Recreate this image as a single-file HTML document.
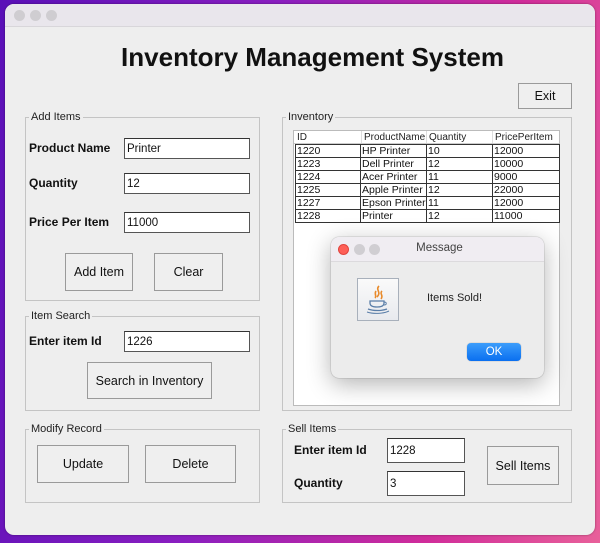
<!DOCTYPE html>
<html><head><style>
*{margin:0;padding:0;box-sizing:border-box}
body{width:600px;height:543px;overflow:hidden;position:relative;font-family:"Liberation Sans","DejaVu Sans",sans-serif;background:linear-gradient(100deg,#5a10b8 0%,#8a1ec0 40%,#d02c9a 75%,#e8609a 100%)}
.a{position:absolute}
.win{left:5px;top:4px;width:590px;height:531px;background:#eeeeee;border-radius:9px;overflow:hidden;box-shadow:0 0 2px rgba(0,0,0,.4)}
.tb{left:0;top:0;width:590px;height:23px;background:#e9e6ec;border-bottom:1px solid #d8d6da}
.dot{width:11px;height:11px;border-radius:50%;background:#cfcdd1;top:6px}
.g{border:1px solid #c4c4c4}
.gl{font-size:11px;color:#222;background:#eeeeee;padding:0 2px;line-height:12px}
.lb{font-size:12px;font-weight:bold;color:#111}
.f{background:#fff;border:1px solid #555;border-top-color:#333;font-size:11.5px;padding-left:2px;color:#111;display:flex;align-items:center}
.b{border:1px solid #9a9a9a;background:#efefef;font-size:12.5px;display:flex;align-items:center;justify-content:center;color:#111}
table{border-collapse:collapse;font-size:10.5px;table-layout:fixed}
td{border:1px solid #333;height:13px;padding:0 1px;line-height:11px;color:#111;white-space:nowrap;overflow:hidden}
</style></head><body>
<div class="a win">
<div class="a tb"></div>
<div class="a dot" style="left:9px"></div><div class="a dot" style="left:25px"></div><div class="a dot" style="left:41px"></div>
</div>
<div class="a" style="left:0;top:42px;width:625px;text-align:center;font-size:26px;font-weight:bold;color:#111">Inventory Management System</div>
<div class="a b" style="left:518px;top:83px;width:54px;height:26px">Exit</div>

<div class="a g" style="left:25px;top:117px;width:235px;height:184px"></div>
<div class="a gl" style="left:29px;top:111px">Add Items</div>
<div class="a lb" style="left:29px;top:141px">Product Name</div>
<div class="a f" style="left:124px;top:138px;width:126px;height:21px">Printer</div>
<div class="a lb" style="left:29px;top:176px">Quantity</div>
<div class="a f" style="left:124px;top:173px;width:126px;height:21px">12</div>
<div class="a lb" style="left:29px;top:215px">Price Per Item</div>
<div class="a f" style="left:124px;top:212px;width:126px;height:21px">11000</div>
<div class="a b" style="left:65px;top:253px;width:68px;height:38px">Add Item</div>
<div class="a b" style="left:154px;top:253px;width:69px;height:38px">Clear</div>

<div class="a g" style="left:25px;top:316px;width:235px;height:95px"></div>
<div class="a gl" style="left:29px;top:310px">Item Search</div>
<div class="a lb" style="left:29px;top:334px">Enter item Id</div>
<div class="a f" style="left:124px;top:331px;width:126px;height:21px">1226</div>
<div class="a b" style="left:87px;top:362px;width:125px;height:37px">Search in Inventory</div>

<div class="a g" style="left:25px;top:429px;width:235px;height:74px"></div>
<div class="a gl" style="left:29px;top:423px">Modify Record</div>
<div class="a b" style="left:37px;top:445px;width:92px;height:38px">Update</div>
<div class="a b" style="left:145px;top:445px;width:91px;height:38px">Delete</div>

<div class="a g" style="left:282px;top:117px;width:290px;height:294px"></div>
<div class="a gl" style="left:286px;top:111px">Inventory</div>
<div class="a" style="left:293px;top:130px;width:267px;height:276px;background:#fff;border:1px solid #bbb"></div>
<div class="a" style="left:294px;top:131px;font-size:10px;color:#222">
<div style="display:flex;height:13px;line-height:13px;border-bottom:1px solid #ccc;width:265px;white-space:nowrap"><span style="width:67px;padding-left:3px">ID</span><span style="width:65px;padding-left:2px;border-left:1px solid #ddd">ProductName</span><span style="width:66px;padding-left:2px;border-left:1px solid #ddd">Quantity</span><span style="width:67px;padding-left:2px;border-left:1px solid #ddd">PricePerItem</span></div>
</div>
<table class="a" style="left:295px;top:144px;width:264px">
<colgroup><col style="width:65px"><col style="width:66px"><col style="width:66px"><col style="width:67px"></colgroup>
<tr><td>1220</td><td>HP Printer</td><td>10</td><td>12000</td></tr>
<tr><td>1223</td><td>Dell Printer</td><td>12</td><td>10000</td></tr>
<tr><td>1224</td><td>Acer Printer</td><td>11</td><td>9000</td></tr>
<tr><td>1225</td><td>Apple Printer</td><td>12</td><td>22000</td></tr>
<tr><td>1227</td><td>Epson Printer</td><td>11</td><td>12000</td></tr>
<tr><td>1228</td><td>Printer</td><td>12</td><td>11000</td></tr>
</table>

<div class="a g" style="left:282px;top:429px;width:290px;height:74px"></div>
<div class="a gl" style="left:286px;top:423px">Sell Items</div>
<div class="a lb" style="left:294px;top:443px">Enter item Id</div>
<div class="a f" style="left:387px;top:438px;width:78px;height:25px">1228</div>
<div class="a lb" style="left:294px;top:476px">Quantity</div>
<div class="a f" style="left:387px;top:471px;width:78px;height:25px">3</div>
<div class="a b" style="left:487px;top:446px;width:72px;height:39px">Sell Items</div>

<div class="a" style="left:331px;top:237px;width:213px;height:141px;background:#ececec;border-radius:8px;box-shadow:0 6px 24px rgba(0,0,0,.3),0 0 1px rgba(0,0,0,.5);overflow:hidden">
<div class="a" style="left:0;top:0;width:213px;height:25px;background:#f0edf2;border-bottom:1px solid #dcdadd"></div>
<div class="a" style="left:7px;top:7px;width:11px;height:11px;border-radius:50%;background:#fe5f57;border:1px solid #e0443e"></div>
<div class="a" style="left:23px;top:7px;width:11px;height:11px;border-radius:50%;background:#d0ced2"></div>
<div class="a" style="left:38px;top:7px;width:11px;height:11px;border-radius:50%;background:#d0ced2"></div>
<div class="a" style="left:0;top:5px;width:213px;text-align:center;font-size:11.5px;color:#444;text-indent:4px">Message</div>
<div class="a" style="left:26px;top:41px;width:42px;height:43px;border:1px solid #a8b0bb;background:linear-gradient(#fafafa,#e8eaee)">
<svg width="40" height="41" viewBox="0 0 40 41"><path d="M21 7c-4 4 3 6-2 11M24 12c-3 3 2 4-1 8M18 12c-2 3 1 5-1 7" stroke="#e88a2a" stroke-width="1.6" fill="none"/><path d="M12 22h14v2c0 3-3 4-7 4s-7-1-7-4z" fill="none" stroke="#5a7ea8" stroke-width="1.3"/><path d="M26 23c3 0 3 3 0 3" stroke="#5a7ea8" fill="none"/><path d="M10 30c5 2 14 2 19 0" stroke="#5a7ea8" stroke-width="1.3" fill="none"/><path d="M9 33c6 2 16 2 22-1" stroke="#5a7ea8" stroke-width="1" fill="none"/></svg>
</div>
<div class="a" style="left:96px;top:55px;font-size:11px;color:#222">Items Sold!</div>
<div class="a" style="left:136px;top:106px;width:54px;height:18px;border-radius:4px;background:linear-gradient(#3c9dfb,#0a6ff0);color:#fff;font-size:11.5px;text-align:center;line-height:18px;box-shadow:0 0 1px rgba(0,0,0,.4)">OK</div>
</div>
</body></html>
